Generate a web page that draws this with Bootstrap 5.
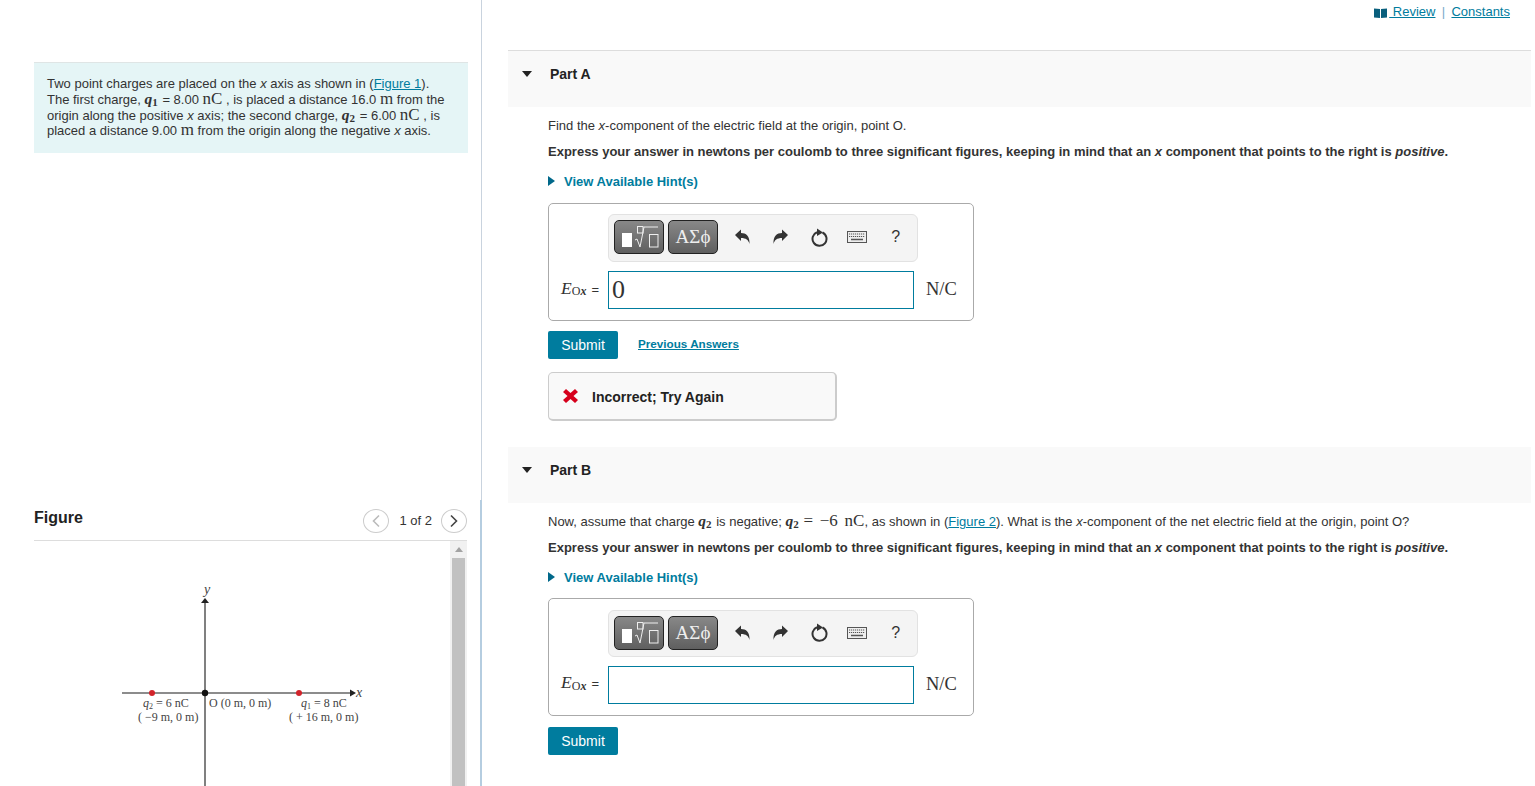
<!DOCTYPE html>
<html lang="en"><head><meta charset="utf-8"><title>Part A</title>
<link href="https://cdn.jsdelivr.net/npm/bootstrap@5.3.0/dist/css/bootstrap.min.css" rel="stylesheet">
<style>
html,body{height:786px;overflow:hidden;background:#fff}
body{font-family:"Liberation Sans",Arial,sans-serif;font-size:13px;line-height:16px;color:#333}
a{color:#007c9e}
.mi{font-family:"Liberation Serif",serif;font-style:italic;font-weight:700;font-size:15.500px;line-height:0;margin-right:1px}
.cm{font-family:"Liberation Serif",serif;font-size:17px;line-height:0}
.cm-wide{word-spacing:2.500px}
.mi sub{font-size:11px;font-style:normal;bottom:-.2em;line-height:0}
.left-pane{width:482px;height:786px;border-right:1px solid #c9d3de;flex:none;position:relative}
.left-pane::after{content:"";position:absolute;right:-1px;top:500px;bottom:0;width:2px;background:#b5cde0}
.intro{margin:62px 13px 0 34px;padding:13px;background:#e5f5f6;border-top:1px solid #dfe5e5;height:91px;line-height:15.800px}
.fig-head{margin:348px 14px 0 34px;height:40px;border-bottom:1px solid #ddd;padding-bottom:6px}
.fig-title{font-size:16px;font-weight:700;color:#222}
.pager-box{margin-top:6px}
.pager-btn{width:26px;height:24px;border-radius:50%;border:1px solid #ccc;background:#fff;padding:0}
.pager-txt{font-size:13px;margin:1px 9px 0 10px}
.fig-body{margin:0 14px 0 34px;height:245px;overflow:hidden}
.figure-canvas{width:416px;height:245px;flex:none}
.sbar{width:17px;background:#f1f1f1;flex:none;height:245px}
.sbar-up{height:17px}
.sbar-thumb{background:#c1c1c1;height:228px;margin:0 2px}
.right-pane{width:1023px;margin-left:26px;flex:none}
.toplinks{height:50px;padding:3.500px 21px 0 0;font-size:13px;line-height:16px}
.toplinks .sep{color:#7aa9c9;margin:0 2.700px}
.part-bar{height:57px;background:#f9f9f9;border-top:1px solid #ddd;padding:15px 0 0 14px;font-weight:700;font-size:14px;color:#222}
.part-bar.nb{border-top:0;height:56px}
.tri-down{width:0;height:0;border:5.500px solid transparent;border-top:6px solid #222;border-bottom:0;margin:5px 18px 0 0}
.part-body{padding:11px 0 0 40px}
.part-body p{margin:0 0 10px}
.tri-right{display:inline-block;width:0;height:0;border:5px solid transparent;border-left:7px solid #00688a;border-right:0;margin-right:9px}
.hint{font-weight:700;color:#007c9e;font-size:13px;text-decoration:none;line-height:16px;display:block;margin-top:13.500px}
.answer{width:426px;height:118px;border:1px solid #aaa;border-radius:5px;margin-top:13.500px}
.answer.second{margin-top:12px}
.tools{width:310px;height:48px;margin-left:59px;margin-top:10px;background:#f4f4f4;border:1px solid #e2e2e2;border-radius:6px;padding:5px 0 0 5px}
.second .tools{height:47px;margin-top:11px}
.tmpl{height:34px;border:1px solid #222;border-radius:5px;background:linear-gradient(#888,#5f5f5f);padding:0;margin-right:4px;color:#eee;flex:none;width:50px}
.tmpl svg{display:block}
.tmpl.greek{font-family:"Liberation Serif",serif;font-size:19px}
.ticon{width:38.600px;height:34px;display:flex;align-items:center;justify-content:center;color:#333;font-size:16px;flex:none}
.ticon.nudge svg{margin-left:3px}
.eq-row{margin-top:9px;padding-left:12px}
.eq-lbl{width:47px;font-size:13px;white-space:nowrap;margin-bottom:3px}
.eq-e{font-family:"Liberation Serif",serif;font-size:17.500px;font-style:italic}
.eq-lbl sub{font-family:"Liberation Serif",serif;font-size:12px;bottom:-.15em;line-height:0;margin-right:5px}
.eq-lbl sub i{font-weight:700}
.mq{width:306px;height:38px;border:1px solid #007c9e;font-family:"Liberation Serif",serif;font-size:26px;line-height:36px;padding-left:3px;color:#333;flex:none}
.unit{font-family:"Liberation Serif",serif;font-size:18.500px;margin:0 0 2px 12px}
.sub-btn{background:#007c9e;color:#fff;border:0;border-radius:2px;width:70px;height:28px;font-size:14px;padding:0}
.sub-row{margin-top:10px}
.sub-row.last{margin-top:11px}
.prev{font-weight:700;font-size:11.700px;margin-left:20px;position:relative;top:-1px}
.result{width:289px;height:49px;margin-top:13px;background:#f9f9f9;border:1px solid #ccc;border-bottom-width:2px;border-right-width:2px;border-radius:5px;padding:2px 0 0 14px;font-weight:700;font-size:14px;color:#222}
.result svg{margin:-2px 14px 0 0}
.part-b{margin-top:26px}
</style></head><body>
<div class="d-flex">
<aside class="left-pane">
  <div class="intro">Two point charges are placed on the <i>x</i> axis as shown in (<a href="#">Figure 1</a>).<br>The first charge, <span class="mi">q<sub>1</sub></span> = 8.00 <span class="cm">nC</span> , is placed a distance 16.0 <span class="cm">m</span> from the origin along the positive <i>x</i> axis; the second charge, <span class="mi">q<sub>2</sub></span> = 6.00 <span class="cm">nC</span> , is placed a distance 9.00 <span class="cm">m</span> from the origin along the negative <i>x</i> axis.</div>
  <div class="fig-head d-flex align-items-center justify-content-between">
    <span class="fig-title">Figure</span>
    <div class="pager-box d-flex align-items-center">
      <button class="pager-btn d-flex align-items-center justify-content-center" aria-label="Previous"><svg width="10" height="14" viewBox="0 0 10 14"><path d="M8 1.500 2.500 7 8 12.500" fill="none" stroke="#bbb" stroke-width="1.600"/></svg></button>
      <span class="pager-txt">1 of 2</span>
      <button class="pager-btn d-flex align-items-center justify-content-center" aria-label="Next"><svg width="10" height="14" viewBox="0 0 10 14"><path d="M2 1.500 7.500 7 2 12.500" fill="none" stroke="#444" stroke-width="1.600"/></svg></button>
    </div>
  </div>
  <div class="fig-body d-flex">
    <svg class="figure-canvas" viewBox="0 0 416 245" font-family="Liberation Serif" font-size="12" fill="#444">
      <line x1="171" y1="60" x2="171" y2="245" stroke="#808080" stroke-width="2"/>
      <path d="M171 57l4 5h-8z" fill="#222"/>
      <text x="170" y="53" font-style="italic" font-size="14">y</text>
      <line x1="88" y1="152" x2="317" y2="152" stroke="#666" stroke-width="1.500"/>
      <path d="M322 152l-6-3.500v7z" fill="#222"/>
      <text x="322" y="156" font-style="italic" font-size="14">x</text>
      <circle cx="118" cy="152" r="3" fill="#d2232a"/>
      <circle cx="265" cy="152" r="3" fill="#d2232a"/>
      <circle cx="171" cy="152" r="3.200" fill="#111"/>
      <text x="109" y="166"><tspan font-style="italic">q</tspan><tspan font-size="8" dy="2">2</tspan><tspan dy="-2"> = 6 nC</tspan></text>
      <text x="104" y="180">( −9 m, 0 m)</text>
      <text x="175" y="166">O  (0 m, 0 m)</text>
      <text x="267" y="166"><tspan font-style="italic">q</tspan><tspan font-size="8" dy="2">1</tspan><tspan dy="-2"> = 8 nC</tspan></text>
      <text x="255" y="180">( + 16 m, 0 m)</text>
    </svg>
    <div class="sbar"><div class="sbar-up d-flex align-items-center justify-content-center"><svg width="8" height="5" viewBox="0 0 8 5"><path d="M4 0l4 5H0z" fill="#a3a3a3"/></svg></div><div class="sbar-thumb"></div></div>
  </div>
</aside>
<main class="right-pane">
  <div class="toplinks d-flex justify-content-end align-items-start">
    <svg class="mt-1" width="15" height="10" viewBox="0 0 15 10"><path d="M0 .5l6 .5v9l-6-.5zM7 1l6-.5v9l-6 .5z" fill="#0a5f7d"/></svg>
    <a href="#">&nbsp;Review</a><span class="sep">&nbsp;|&nbsp;</span><a href="#">Constants</a>
  </div>
  <section>
    <div class="part-bar d-flex align-items-start"><span class="tri-down"></span>Part A</div>
    <div class="part-body">
      <p>Find the <i>x</i>-component of the electric field at the origin, point O.</p>
      <p class="fw-bold">Express your answer in newtons per coulomb to three significant figures, keeping in mind that an <i>x</i> component that points to the right is <i>positive</i>.</p>
      <a class="hint" href="#"><span class="tri-right"></span>View Available Hint(s)</a>
      <div class="answer">
        <div class="tools d-flex">
          <button class="tmpl" aria-label="Templates"><svg width="48" height="32" viewBox="0 0 48 32"><rect x="7" y="12" width="10" height="14" fill="#fff"/><rect x="22.500" y="5.500" width="5.500" height="6.500" fill="none" stroke="#eee"/><path d="M20 19l2-1 3 8 4-20h14" fill="none" stroke="#eee"/><rect x="34.500" y="13.500" width="8.500" height="12.500" fill="none" stroke="#eee"/></svg></button>
          <button class="tmpl greek">ΑΣϕ</button>
          <span class="ticon nudge"><svg width="16" height="16" viewBox="0 0 16 16"><path d="M0 6l6-5.500V4c5 0 9 3 8.500 11-1-4-3.500-6-8.500-6v3z" fill="#333"/></svg></span>
          <span class="ticon nudge"><svg width="16" height="16" viewBox="0 0 16 16"><path d="M15 6L9 .5V4c-5 0-9 3-8.500 11 1-4 3.500-6 8.500-6v3z" fill="#333"/></svg></span>
          <span class="ticon nudge"><svg width="18" height="19" viewBox="0 0 18 19"><path d="M11.500 4.500A7 7 0 1 1 6 4.300" fill="none" stroke="#333" stroke-width="2"/><path d="M6 .5l6 4-6 3.500z" fill="#333"/></svg></span>
          <span class="ticon"><svg width="20" height="12" viewBox="0 0 20 12"><rect x=".5" y=".5" width="19" height="11" fill="#eee" stroke="#555"/><path d="M2 3h16M2 5.500h16" stroke="#555" stroke-dasharray="1.200 .8"/><path d="M4 8.500h12" stroke="#555" stroke-width="1.500"/></svg></span>
          <span class="ticon">?</span>
        </div>
        <div class="eq-row d-flex align-items-center">
          <span class="eq-lbl"><span class="eq-e">E</span><sub>O<i>x</i></sub>=</span>
          <span class="mq">0</span>
          <span class="unit">N/C</span>
        </div>
      </div>
      <div class="sub-row d-flex align-items-center"><button class="sub-btn">Submit</button><a class="prev" href="#">Previous Answers</a></div>
      <div class="result d-flex align-items-center"><svg width="15" height="14" viewBox="0 0 15 14"><path d="M0 3L3 0l4.500 4L12 0l3 3-4.500 4 4.500 4-3 3-4.500-4L3 14l-3-3 4.500-4z" fill="#d6001c"/></svg>Incorrect; Try Again</div>
    </div>
  </section>
  <section class="part-b">
    <div class="part-bar nb d-flex align-items-start"><span class="tri-down"></span>Part B</div>
    <div class="part-body">
      <p>Now, assume that charge <span class="mi">q<sub>2</sub></span> is negative; <span class="mi">q<sub>2</sub></span> <span class="cm cm-wide">= −6 nC</span>, as shown in (<a href="#">Figure 2</a>). What is the <i>x</i>-component of the net electric field at the origin, point O?</p>
      <p class="fw-bold">Express your answer in newtons per coulomb to three significant figures, keeping in mind that an <i>x</i> component that points to the right is <i>positive</i>.</p>
      <a class="hint" href="#"><span class="tri-right"></span>View Available Hint(s)</a>
      <div class="answer second">
        <div class="tools d-flex">
          <button class="tmpl" aria-label="Templates"><svg width="48" height="32" viewBox="0 0 48 32"><rect x="7" y="12" width="10" height="14" fill="#fff"/><rect x="22.500" y="5.500" width="5.500" height="6.500" fill="none" stroke="#eee"/><path d="M20 19l2-1 3 8 4-20h14" fill="none" stroke="#eee"/><rect x="34.500" y="13.500" width="8.500" height="12.500" fill="none" stroke="#eee"/></svg></button>
          <button class="tmpl greek">ΑΣϕ</button>
          <span class="ticon nudge"><svg width="16" height="16" viewBox="0 0 16 16"><path d="M0 6l6-5.500V4c5 0 9 3 8.500 11-1-4-3.500-6-8.500-6v3z" fill="#333"/></svg></span>
          <span class="ticon nudge"><svg width="16" height="16" viewBox="0 0 16 16"><path d="M15 6L9 .5V4c-5 0-9 3-8.500 11 1-4 3.500-6 8.500-6v3z" fill="#333"/></svg></span>
          <span class="ticon nudge"><svg width="18" height="19" viewBox="0 0 18 19"><path d="M11.500 4.500A7 7 0 1 1 6 4.300" fill="none" stroke="#333" stroke-width="2"/><path d="M6 .5l6 4-6 3.500z" fill="#333"/></svg></span>
          <span class="ticon"><svg width="20" height="12" viewBox="0 0 20 12"><rect x=".5" y=".5" width="19" height="11" fill="#eee" stroke="#555"/><path d="M2 3h16M2 5.500h16" stroke="#555" stroke-dasharray="1.200 .8"/><path d="M4 8.500h12" stroke="#555" stroke-width="1.500"/></svg></span>
          <span class="ticon">?</span>
        </div>
        <div class="eq-row d-flex align-items-center">
          <span class="eq-lbl"><span class="eq-e">E</span><sub>O<i>x</i></sub>=</span>
          <span class="mq"></span>
          <span class="unit">N/C</span>
        </div>
      </div>
      <div class="sub-row last d-flex align-items-center"><button class="sub-btn">Submit</button></div>
    </div>
  </section>
</main>
</div>
<script src="https://cdn.jsdelivr.net/npm/bootstrap@5.3.0/dist/js/bootstrap.bundle.min.js"></script>
</body></html>
